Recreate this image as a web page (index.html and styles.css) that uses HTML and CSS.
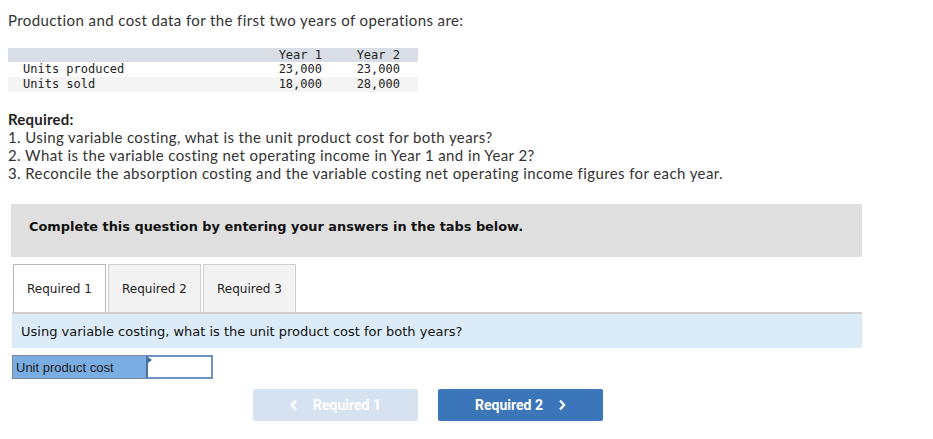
FILE: index.html
```html
<!DOCTYPE html>
<html lang="en">
<head>
<meta charset="utf-8">
<title>Variable costing</title>
<link rel="stylesheet" href="styles.css">
</head>
<body>
<div class="page">
  <p class="intro">Production and cost data for the first two years of operations are:</p>

  <table class="data">
    <thead>
      <tr><th class="c-label"></th><th class="c-num">Year 1</th><th class="c-num">Year 2</th><th class="c-pad"></th></tr>
    </thead>
    <tbody>
      <tr><td class="c-label">Units produced</td><td class="c-num">23,000</td><td class="c-num">23,000</td><td class="c-pad"></td></tr>
      <tr class="alt"><td class="c-label">Units sold</td><td class="c-num">18,000</td><td class="c-num">28,000</td><td class="c-pad"></td></tr>
    </tbody>
  </table>

  <div class="required">
    <div class="req-title">Required:</div>
    <div>1. Using variable costing, what is the unit product cost for both years?</div>
    <div>2. What is the variable costing net operating income in Year 1 and in Year 2?</div>
    <div>3. Reconcile the absorption costing and the variable costing net operating income figures for each year.</div>
  </div>

  <div class="instr">Complete this question by entering your answers in the tabs below.</div>

  <div class="tabs">
    <div class="tab active">Required 1</div>
    <div class="tab">Required 2</div>
    <div class="tab">Required 3</div>
  </div>

  <div class="prompt">Using variable costing, what is the unit product cost for both years?</div>

  <div class="answer-row">
    <div class="ans-label">Unit product cost</div>
    <div class="ans-input"><span class="marker"></span></div>
  </div>

  <div class="nav">
    <button class="btn prev" type="button">
      <svg class="chev" width="8" height="12" viewBox="0 0 8 12"><path d="M6 1.5 L1.8 6 L6 10.5" fill="none" stroke="#fff" stroke-width="2.2"/></svg>
      <span>Required 1</span>
    </button>
    <button class="btn next" type="button">
      <span>Required 2</span>
      <svg class="chev" width="8" height="12" viewBox="0 0 8 12"><path d="M2 1.5 L6.2 6 L2 10.5" fill="none" stroke="#fff" stroke-width="2.2"/></svg>
    </button>
  </div>
</div>
</body>
</html>
```

FILE: styles.css
```css
html, body {
  margin: 0;
  padding: 0;
  background: #fff;
}

.page {
  padding: 11px 0 0 0;
  color: #222;
}

.intro {
  margin: 0 0 0 8px;
  font-family: Lato, "Open Sans", sans-serif;
  font-size: 15px;
  letter-spacing: 0.4px;
  line-height: 18px;
  color: #333;
}

.data {
  margin: 19px 0 0 8px;
  border-collapse: collapse;
  width: 410px;
  font-family: "DejaVu Sans Mono", "Liberation Mono", monospace;
  font-size: 12px;
  color: #222;
}

.data th, .data td {
  padding: 0;
  font-weight: normal;
  white-space: nowrap;
}

.data thead tr {
  background: #d9dde5;
  height: 14px;
  line-height: 14px;
}

.data tbody tr {
  height: 15px;
  line-height: 15px;
}

.data tr.alt {
  background: #f4f4f4;
}

.c-label {
  text-align: left;
  padding-left: 15px !important;
  width: 221px;
}

.c-num {
  text-align: right;
  width: 78px;
}

.c-pad {
  width: 18px;
}

.required {
  margin: 18px 0 0 8px;
  font-family: Lato, "Open Sans", sans-serif;
  font-size: 15px;
  letter-spacing: 0.4px;
  line-height: 18px;
  color: #333;
}

.req-title {
  font-weight: bold;
  letter-spacing: 0.2px;
  color: #222;
}

.instr {
  margin: 22px 0 0 11px;
  width: 851px;
  height: 53px;
  box-sizing: border-box;
  padding: 0 0 8px 18px;
  display: flex;
  align-items: center;
  background: #dfdfdf;
  font-family: "DejaVu Sans", Verdana, sans-serif;
  font-weight: bold;
  font-size: 12.9px;
  color: #111;
}

.tabs {
  display: flex;
  gap: 2px;
  margin: 7px 0 0 13px;
}

.tab {
  width: 93px;
  height: 48px;
  box-sizing: border-box;
  display: flex;
  align-items: center;
  justify-content: center;
  background: #f2f2f2;
  border: 1px solid #cfcfcf;
  border-bottom: none;
  font-family: "DejaVu Sans", Verdana, sans-serif;
  font-size: 12px;
  color: #222;
}

.tab.active {
  background: #fff;
  border-color: #b9b9b9;
}

.prompt {
  margin: 0 0 0 12px;
  width: 850px;
  height: 36px;
  box-sizing: border-box;
  border-top: 2px solid #cfcfcf;
  background: #dbebf8;
  padding: 0 0 0 9px;
  display: flex;
  align-items: center;
  font-family: "DejaVu Sans", Verdana, sans-serif;
  font-size: 13px;
  color: #111;
}

.answer-row {
  display: flex;
  margin: 7px 0 0 12px;
  height: 24px;
}

.ans-label {
  width: 134px;
  box-sizing: border-box;
  background: #7aaee3;
  border: 1px solid #7c8a99;
  border-right: none;
  padding-left: 3px;
  display: flex;
  align-items: center;
  font-family: "Liberation Sans", Arial, sans-serif;
  font-size: 13px;
  color: #1a1a1a;
}

.ans-input {
  position: relative;
  width: 67px;
  box-sizing: border-box;
  background: #fff;
  border: 2px solid #6c93c4;
  border-left: 2px solid #4f6f98;
}

.marker {
  position: absolute;
  left: 0;
  top: 0;
  width: 0;
  height: 0;
  border-top: 3px solid transparent;
  border-bottom: 3px solid transparent;
  border-left: 4px solid #3b6fb0;
}

.nav {
  display: flex;
  gap: 20px;
  margin: 10px 0 0 253px;
}

.btn {
  width: 165px;
  height: 32px;
  border: none;
  border-radius: 2px;
  display: flex;
  align-items: center;
  justify-content: center;
  gap: 15px;
  padding: 0;
  font-family: Roboto, "Liberation Sans", sans-serif;
  font-weight: bold;
  font-size: 14px;
  color: #fff;
}

.btn.prev {
  background: #d6e2f0;
}

.btn.next {
  background: #3a76b9;
}

.chev {
  display: block;
}
```
